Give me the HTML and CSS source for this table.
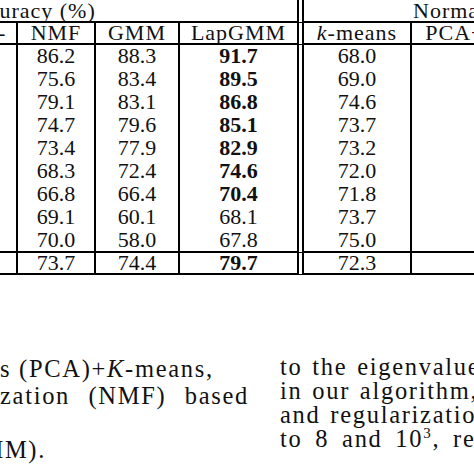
FILE: index.html
```html
<!DOCTYPE html>
<html lang="en">
<head>
    <meta charset="UTF-8">
    <meta name="viewport" content="width=device-width, initial-scale=1.0">
    <title>Clustering results</title>
    <link rel="stylesheet" href="styles.css">
</head>
<body>
    <div class="results">
        <!-- group headers -->
        <div class="cell group acc"><span class="acc-title">Accuracy (%)</span></div>
        <div class="cell group nmi">Normalized Mutual Information (%)</div>

        <!-- method names -->
        <div class="cell head stub"><span>-</span></div>
        <div class="cell head c1">NMF</div>
        <div class="cell head c2">GMM</div>
        <div class="cell head c3">LapGMM</div>
        <div class="cell head c4"><i>k</i>-means</div>
        <div class="cell head c5">PCA+<i>K</i>-means</div>

        <div class="cell"></div>
        <div class="cell c1">86.2</div>
        <div class="cell c2">88.3</div>
        <div class="cell c3 best">91.7</div>
        <div class="cell c4">68.0</div>
        <div class="cell c5"></div>

        <div class="cell"></div>
        <div class="cell c1">75.6</div>
        <div class="cell c2">83.4</div>
        <div class="cell c3 best">89.5</div>
        <div class="cell c4">69.0</div>
        <div class="cell c5"></div>

        <div class="cell"></div>
        <div class="cell c1">79.1</div>
        <div class="cell c2">83.1</div>
        <div class="cell c3 best">86.8</div>
        <div class="cell c4">74.6</div>
        <div class="cell c5"></div>

        <div class="cell"></div>
        <div class="cell c1">74.7</div>
        <div class="cell c2">79.6</div>
        <div class="cell c3 best">85.1</div>
        <div class="cell c4">73.7</div>
        <div class="cell c5"></div>

        <div class="cell"></div>
        <div class="cell c1">73.4</div>
        <div class="cell c2">77.9</div>
        <div class="cell c3 best">82.9</div>
        <div class="cell c4">73.2</div>
        <div class="cell c5"></div>

        <div class="cell"></div>
        <div class="cell c1">68.3</div>
        <div class="cell c2">72.4</div>
        <div class="cell c3 best">74.6</div>
        <div class="cell c4">72.0</div>
        <div class="cell c5"></div>

        <div class="cell"></div>
        <div class="cell c1">66.8</div>
        <div class="cell c2">66.4</div>
        <div class="cell c3 best">70.4</div>
        <div class="cell c4">71.8</div>
        <div class="cell c5"></div>

        <div class="cell"></div>
        <div class="cell c1">69.1</div>
        <div class="cell c2">60.1</div>
        <div class="cell c3">68.1</div>
        <div class="cell c4">73.7</div>
        <div class="cell c5"></div>

        <div class="cell last"></div>
        <div class="cell last c1">70.0</div>
        <div class="cell last c2">58.0</div>
        <div class="cell last c3">67.8</div>
        <div class="cell last c4">75.0</div>
        <div class="cell last c5"></div>

        <!-- average -->
        <div class="cell last"></div>
        <div class="cell last c1">73.7</div>
        <div class="cell last c2">74.4</div>
        <div class="cell last c3 best">79.7</div>
        <div class="cell last c4">72.3</div>
        <div class="cell last c5"></div>
    </div>

    <div class="text">
        <div class="left">
            <p>s (PCA)+<i>K</i>-means,</p>
            <p class="fill">zation (NMF) based</p>
            <p>&nbsp;</p>
            <p><span class="tail">GMM).</span></p>
        </div>
        <div class="right">
            <p>to the eigenvalue problem</p>
            <p>in our algorithm, the</p>
            <p>and regularization</p>
            <p class="wide">to 8 and 10<sup>3</sup>, respectively.</p>
        </div>
    </div>
</body>
</html>
```

FILE: styles.css
```css
*{
    margin: 0;
    padding: 0;
    box-sizing: border-box;
}
html,
body{
    overflow: hidden;
}
body{
    width: 474px;
    height: 474px;
    background-color: #fff;
    color: #111;
    font-family: "Liberation Serif", "Times New Roman", serif;
}

/* table */
.results{
    display: grid;
    grid-template-columns: 16px 78px 84px 126px 106px 173px;
    grid-template-rows: 23px 22px 22px repeat(7, 23px) 25px 22px;
    font-size: 22px;
}
.cell{
    display: flex;
    align-items: center;
    justify-content: center;
    white-space: nowrap;
    overflow: hidden;
}
.group{
    justify-content: flex-start;
    border-bottom: 2px solid #000;
    letter-spacing: 1px;
}
.acc{
    grid-column: 1 / 5;
    border-right: 7px double #000;
}
.acc-title{
    margin-left: -39px;
}
.nmi{
    grid-column: 5 / 7;
    padding-left: 109px;
}
.head{
    border-bottom: 2px solid #000;
    letter-spacing: 1px;
}
.stub{
    justify-content: flex-start;
}
.stub span{
    margin-left: -2px;
}
.c1,
.c2,
.c3,
.c5{
    border-left: 2px solid #000;
}
.c3{
    border-right: 7px double #000;
}
.last{
    border-bottom: 2px solid #000;
}
.best{
    font-weight: bold;
}

/* two-column text below */
.text{
    display: flex;
    gap: 31px;
    margin-top: 80px;
    font-size: 24.5px;
    letter-spacing: 1.7px;
}
.left{
    flex: none;
    width: 249px;
    line-height: 27px;
    white-space: nowrap;
}
.fill{
    text-align: justify;
    text-align-last: justify;
    white-space: normal;
}
.tail{
    margin-left: -38px;
}
.right{
    flex: none;
    line-height: 24px;
    white-space: nowrap;
    word-spacing: 2px;
}
.wide{
    word-spacing: 5px;
}
sup{
    font-size: 15px;
    line-height: 0;
}
```
